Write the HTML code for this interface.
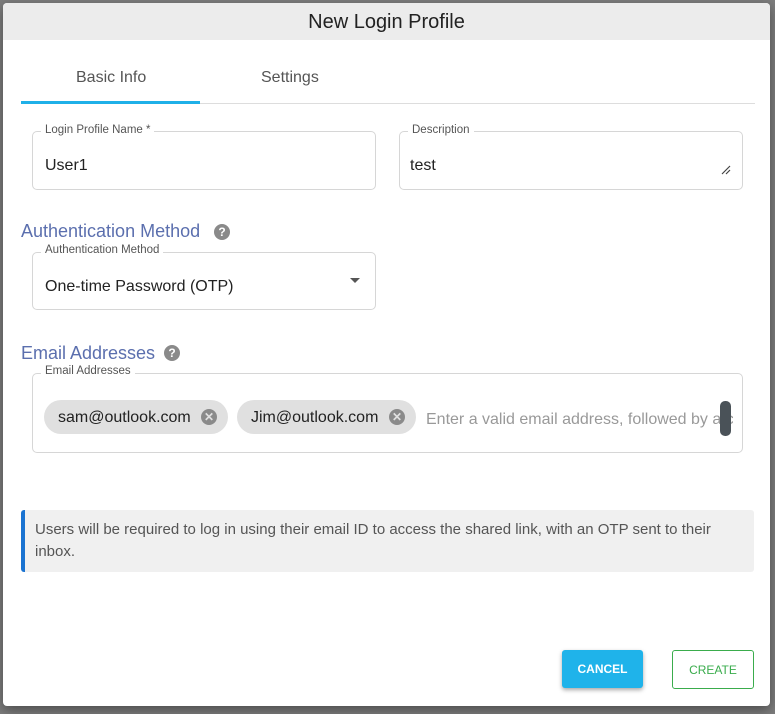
<!DOCTYPE html>
<html><head><style>
*{box-sizing:border-box;margin:0;padding:0}
body{width:775px;height:714px;background:#7d7d7d;font-family:"Liberation Sans",Arial,sans-serif;position:relative;overflow:hidden}
.dlg{position:absolute;left:3px;top:3px;width:767px;height:703px;background:#fff;border-radius:4px;overflow:hidden;box-shadow:0 4px 12px rgba(0,0,0,.4)}
.hdr{position:absolute;left:0;top:0;width:100%;height:37px;background:#ececec;text-align:center;font-size:20px;line-height:38px;color:#222}
.a{position:absolute}
.tab{font-size:16px;color:#555}
.fs{position:absolute;border:1px solid #d6d6d6;border-radius:5px}
.lg{position:absolute;top:-8px;left:8px;background:#fff;padding:0 4px;font-size:11.5px;color:#555}
.val{position:absolute;font-size:16px;color:#222}
.sec{position:absolute;font-size:18px;color:#5b6fae}
.q{position:absolute;width:16px;height:16px;border-radius:50%;background:#8a8a8a;color:#fff;font-size:12px;font-weight:bold;text-align:center;line-height:16px}
.chip{position:absolute;top:397px;height:34px;border-radius:17px;background:#e0e0e0;font-size:16px;color:#222;line-height:36px;padding-left:14px}
.x{position:absolute;right:11px;top:9px;width:16px;height:16px;border-radius:50%;background:#8a8a8a;color:#e0e0e0;font-size:12px;line-height:16px;text-align:center;font-weight:bold}
</style></head><body>
<div class="dlg">
<div class="hdr">New Login Profile</div>
<div class="a tab" style="left:73px;top:66px">Basic Info</div>
<div class="a tab" style="left:258px;top:66px">Settings</div>
<div class="a" style="left:18px;top:100px;width:734px;height:1px;background:#ddd"></div>
<div class="a" style="left:18px;top:98px;width:179px;height:3px;background:#1fb0e8"></div>

<div class="fs" style="left:29px;top:128px;width:344px;height:59px"><span class="lg">Login Profile Name *</span><span class="val" style="left:12px;top:25px">User1</span></div>
<div class="fs" style="left:396px;top:128px;width:344px;height:59px"><span class="lg">Description</span><span class="val" style="left:10px;top:25px">test</span>
<svg class="a" style="right:11px;bottom:14px" width="10" height="10"><path d="M1 9L9 1M5 9L9 5" stroke="#444" stroke-width="1.2"/></svg></div>

<div class="sec" style="left:18px;top:218px">Authentication Method</div>
<div class="q" style="left:211px;top:221px">?</div>
<div class="fs" style="left:29px;top:249px;width:344px;height:58px"><span class="lg" style="top:-9px">Authentication Method</span><span class="val" style="left:12px;top:25px">One-time Password (OTP)</span>
<div class="a" style="right:15px;top:25px;width:0;height:0;border-left:5px solid transparent;border-right:5px solid transparent;border-top:5px solid #555"></div></div>

<div class="sec" style="left:18px;top:340px">Email Addresses</div>
<div class="q" style="left:161px;top:342px">?</div>
<div class="fs" style="left:29px;top:370px;width:711px;height:80px"><span class="lg" style="top:-9px">Email Addresses</span>
<div class="a" style="left:0;top:0;width:700px;height:78px;overflow:hidden"><span class="val" style="left:393px;top:37px;color:#999;white-space:nowrap">Enter a valid email address, followed by a c</span></div>
<div class="a" style="left:687px;top:27px;width:11px;height:35px;border-radius:5px;background:#4a5258"></div></div>
<div class="chip" style="left:41px;width:184px">sam@outlook.com<span class="x">✕</span></div>
<div class="chip" style="left:234px;width:179px">Jim@outlook.com<span class="x">✕</span></div>

<div class="a" style="left:18px;top:507px;width:733px;height:62px;background:#f0f0f0;border-left:4px solid #1a73d1;border-radius:3px;padding:9px 10px;font-size:15px;line-height:22px;color:#555">Users will be required to log in using their email ID to access the shared link, with an OTP sent to their inbox.</div>

<div class="a" style="left:559px;top:647px;width:81px;height:38px;background:#1fb3ea;border-radius:3px;box-shadow:0 2px 4px rgba(0,0,0,.35);color:#fff;font-size:12px;font-weight:bold;text-align:center;line-height:38px">CANCEL</div>
<div class="a" style="left:669px;top:647px;width:82px;height:39px;border:1px solid #3aac4c;border-radius:3px;color:#3aac4c;font-size:12px;text-align:center;line-height:39px">CREATE</div>
</div>
</body></html>
